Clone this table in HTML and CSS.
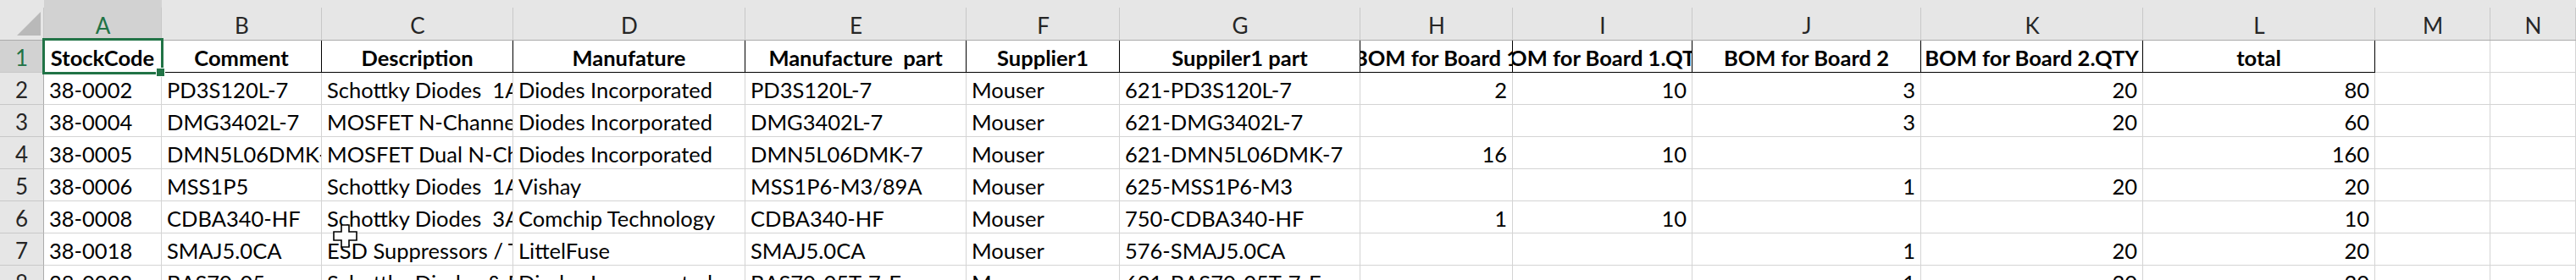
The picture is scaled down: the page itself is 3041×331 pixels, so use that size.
FILE: index.html
```html
<!DOCTYPE html>
<html lang="en">
<head>
<meta charset="utf-8">
<title>BOM</title>
<link rel="stylesheet" href="styles.css">
</head>
<body>
<div class="sheet">
  <div class="grid">
    <div class="corner"><svg class="tri" width="30" height="30" viewBox="0 0 30 30"><polygon points="1,29 29,29 29,1" fill="#b9b9b9"/></svg></div>
    <div class="ch sel">A</div><div class="ch">B</div><div class="ch">C</div><div class="ch">D</div><div class="ch">E</div><div class="ch">F</div><div class="ch">G</div><div class="ch">H</div><div class="ch">I</div><div class="ch">J</div><div class="ch">K</div><div class="ch">L</div><div class="ch">M</div><div class="ch">N</div>

    <div class="rh sel">1</div>
    <div class="c h"><span>StockCode</span></div><div class="c h"><span>Comment</span></div><div class="c h"><span>Description</span></div><div class="c h"><span>Manufature</span></div><div class="c h"><span>Manufacture&nbsp; part</span></div><div class="c h"><span>Supplier1</span></div><div class="c h"><span>Suppiler1 part</span></div><div class="c h"><span>BOM for Board 1</span></div><div class="c h"><span>BOM for Board 1.QTY</span></div><div class="c h"><span>BOM for Board 2</span></div><div class="c h"><span>BOM for Board 2.QTY</span></div><div class="c h"><span>total</span></div><div class="c"></div><div class="c"></div>

    <div class="rh">2</div>
    <div class="c">38-0002</div><div class="c">PD3S120L-7</div><div class="c">Schottky Diodes&nbsp; 1A 20V</div><div class="c">Diodes Incorporated</div><div class="c">PD3S120L-7</div><div class="c">Mouser</div><div class="c">621-PD3S120L-7</div><div class="c n">2</div><div class="c n">10</div><div class="c n">3</div><div class="c n">20</div><div class="c n">80</div><div class="c"></div><div class="c"></div>

    <div class="rh">3</div>
    <div class="c">38-0004</div><div class="c">DMG3402L-7</div><div class="c">MOSFET N-Channel 30V</div><div class="c">Diodes Incorporated</div><div class="c">DMG3402L-7</div><div class="c">Mouser</div><div class="c">621-DMG3402L-7</div><div class="c n"></div><div class="c n"></div><div class="c n">3</div><div class="c n">20</div><div class="c n">60</div><div class="c"></div><div class="c"></div>

    <div class="rh">4</div>
    <div class="c">38-0005</div><div class="c">DMN5L06DMK-7</div><div class="c">MOSFET Dual N-Channel</div><div class="c">Diodes Incorporated</div><div class="c">DMN5L06DMK-7</div><div class="c">Mouser</div><div class="c">621-DMN5L06DMK-7</div><div class="c n">16</div><div class="c n">10</div><div class="c n"></div><div class="c n"></div><div class="c n">160</div><div class="c"></div><div class="c"></div>

    <div class="rh">5</div>
    <div class="c">38-0006</div><div class="c">MSS1P5</div><div class="c">Schottky Diodes&nbsp; 1A 50V</div><div class="c">Vishay</div><div class="c">MSS1P6-M3/89A</div><div class="c">Mouser</div><div class="c">625-MSS1P6-M3</div><div class="c n"></div><div class="c n"></div><div class="c n">1</div><div class="c n">20</div><div class="c n">20</div><div class="c"></div><div class="c"></div>

    <div class="rh">6</div>
    <div class="c">38-0008</div><div class="c">CDBA340-HF</div><div class="c">Schottky Diodes&nbsp; 3A 40V</div><div class="c">Comchip Technology</div><div class="c">CDBA340-HF</div><div class="c">Mouser</div><div class="c">750-CDBA340-HF</div><div class="c n">1</div><div class="c n">10</div><div class="c n"></div><div class="c n"></div><div class="c n">10</div><div class="c"></div><div class="c"></div>

    <div class="rh">7</div>
    <div class="c">38-0018</div><div class="c">SMAJ5.0CA</div><div class="c">ESD Suppressors / TVS Diodes</div><div class="c">LittelFuse</div><div class="c">SMAJ5.0CA</div><div class="c">Mouser</div><div class="c">576-SMAJ5.0CA</div><div class="c n"></div><div class="c n"></div><div class="c n">1</div><div class="c n">20</div><div class="c n">20</div><div class="c"></div><div class="c"></div>

    <div class="rh">8</div>
    <div class="c">38-0033</div><div class="c">BAS70-05</div><div class="c">Schottky Diodes &amp; Rectifiers</div><div class="c">Diodes Incorporated</div><div class="c">BAS70-05T-7-F</div><div class="c">Mouser</div><div class="c">621-BAS70-05T-7-F</div><div class="c n"></div><div class="c n"></div><div class="c n">1</div><div class="c n">20</div><div class="c n">20</div><div class="c"></div><div class="c"></div>
  </div>

  <div class="selbox"></div>
  <div class="handle"></div>
  <svg class="cursor" width="30" height="28" viewBox="0 0 30 28">
    <polygon points="10,1 19,1 19,9 28,9 28,19 19,19 19,27 10,27 10,19 1,19 1,9 10,9" fill="#fff" stroke="#000" stroke-width="1.6"/>
  </svg>
</div>
</body>
</html>
```
FILE: styles.css
```css
html, body {
  margin: 0;
  padding: 0;
  background: #ffffff;
}
body {
  width: 3041px;
  height: 331px;
  overflow: hidden;
  font-family: "Lato", "Open Sans", sans-serif;
}
.sheet {
  position: relative;
  width: 3041px;
  height: 331px;
  overflow: hidden;
}
.grid {
  display: grid;
  grid-template-columns: 52px 139px 189px 226px 274px 261px 181px 284px 180px 212px 270px 262px 274px 136px 101px;
  grid-template-rows: 48px repeat(8, 38px);
}
.corner {
  background: #e6e6e6 linear-gradient(#c8c8c8, #c8c8c8) right bottom / 1px 38px no-repeat;
  border-bottom: 1px solid #ababab;
  box-sizing: border-box;
  display: flex;
  align-items: flex-end;
  justify-content: flex-end;
  padding: 0 3px 4px 0;
}
.tri { display: block; }
.ch {
  background: #e6e6e6 linear-gradient(#c8c8c8, #c8c8c8) right bottom / 1px 38px no-repeat;
  border-bottom: 1px solid #ababab;
  box-sizing: border-box;
  color: #262626;
  font-size: 26px;
  line-height: 28px;
  display: flex;
  align-items: flex-end;
  justify-content: center;
  padding-bottom: 3px;
}
.ch.sel {
  background-color: #d2d2d2;
  color: #217346;
}
.rh {
  background: #e6e6e6;
  border-right: 1px solid #ababab;
  border-bottom: 1px solid #c8c8c8;
  box-sizing: border-box;
  color: #262626;
  font-size: 26px;
  line-height: 28px;
  display: flex;
  align-items: flex-end;
  justify-content: center;
  padding-bottom: 3px;
}
.rh.sel {
  background: #d2d2d2;
  color: #217346;
}
.c {
  box-sizing: border-box;
  border-right: 1px solid #d4d4d4;
  border-bottom: 1px solid #d4d4d4;
  background: #ffffff;
  color: #000000;
  font-size: 25.5px;
  line-height: 28px;
  display: flex;
  align-items: flex-end;
  justify-content: flex-start;
  padding: 0 6px 3px 6px;
  overflow: hidden;
  white-space: nowrap;
  min-width: 0;
}
.c > span { flex-shrink: 0; }
.c.n { justify-content: flex-end; }
.c.h {
  font-weight: 700;
  justify-content: center;
  border-right-color: #000000;
  border-bottom-color: #000000;
  padding-left: 0;
  padding-right: 0;
}
.selbox {
  position: absolute;
  left: 50px;
  top: 45px;
  width: 143px;
  height: 43px;
  border: 3px solid #217346;
  box-sizing: border-box;
}
.handle {
  position: absolute;
  left: 184px;
  top: 80px;
  width: 9px;
  height: 9px;
  background: #217346;
  border: 1px solid #ffffff;
  box-sizing: content-box;
}
.cursor {
  position: absolute;
  left: 393px;
  top: 265px;
}
```
